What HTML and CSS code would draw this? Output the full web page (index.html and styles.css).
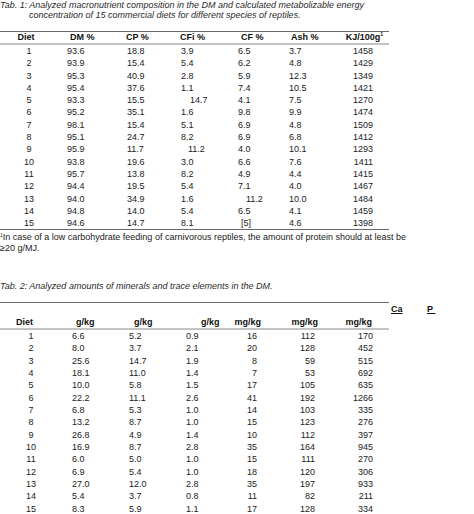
FILE: index.html
```html
<!DOCTYPE html>
<html>
<head>
<meta charset="utf-8">
<link rel="stylesheet" href="styles.css">
</head>
<body>
<div class="cap cap1">
  <div class="l1">Tab. 1: Analyzed macronutrient composition in the DM and calculated metabolizable energy</div>
  <div class="l2">concentration of 15 commercial diets for different species of reptiles.</div>
</div>
<div class="t1">
  <div class="row head"><span>Diet</span><span>DM %</span><span>CP %</span><span>CFi %</span><span>CF %</span><span>Ash %</span><span>KJ/100g<sup>1</sup></span></div>
  <div class="body">
    <div class="row"><span>1</span><span>93.6</span><span>18.8</span><span>3.9</span><span>6.5</span><span>3.7</span><span>1458</span></div>
    <div class="row"><span>2</span><span>93.9</span><span>15.4</span><span>5.4</span><span>6.2</span><span>4.8</span><span>1429</span></div>
    <div class="row"><span>3</span><span>95.3</span><span>40.9</span><span>2.8</span><span>5.9</span><span>12.3</span><span>1349</span></div>
    <div class="row"><span>4</span><span>95.4</span><span>37.6</span><span>1.1</span><span>7.4</span><span>10.5</span><span>1421</span></div>
    <div class="row"><span>5</span><span>93.3</span><span>15.5</span><span class="in9">14.7</span><span>4.1</span><span>7.5</span><span>1270</span></div>
    <div class="row"><span>6</span><span>95.2</span><span>35.1</span><span>1.6</span><span>9.8</span><span>9.9</span><span>1474</span></div>
    <div class="row"><span>7</span><span>98.1</span><span>15.4</span><span>5.1</span><span>6.9</span><span>4.8</span><span>1509</span></div>
    <div class="row"><span>8</span><span>95.1</span><span>24.7</span><span>8.2</span><span>6.9</span><span>6.8</span><span>1412</span></div>
    <div class="row"><span>9</span><span>95.9</span><span>11.7</span><span class="in7">11.2</span><span>4.0</span><span>10.1</span><span>1293</span></div>
    <div class="row"><span>10</span><span>93.8</span><span>19.6</span><span>3.0</span><span>6.6</span><span>7.6</span><span>1411</span></div>
    <div class="row"><span>11</span><span>95.7</span><span>13.8</span><span>8.2</span><span>4.9</span><span>4.4</span><span>1415</span></div>
    <div class="row"><span>12</span><span>94.4</span><span>19.5</span><span>5.4</span><span>7.1</span><span>4.0</span><span>1467</span></div>
    <div class="row"><span>13</span><span>94.0</span><span>34.9</span><span>1.6</span><span class="in8">11.2</span><span>10.0</span><span>1484</span></div>
    <div class="row"><span>14</span><span>94.8</span><span>14.0</span><span>5.4</span><span>6.5</span><span>4.1</span><span>1459</span></div>
    <div class="row"><span>15</span><span>94.6</span><span>14.7</span><span>8.1</span><span class="in3">[5]</span><span>4.6</span><span>1398</span></div>
  </div>
</div>
<div class="note">
  <div class="n1"><sup>1</sup>In case of a low carbohydrate feeding of carnivorous reptiles, the amount of protein should at least be</div>
  <div class="n2">≥20 g/MJ.</div>
</div>
<div class="cap cap2">Tab. 2: Analyzed amounts of minerals and trace elements in the DM.</div>
<div class="wrap2">
  <div class="t2">
    <div class="row head"><span>Diet</span><span>g/kg</span><span>g/kg</span><span>g/kg</span><span>mg/kg</span><span>mg/kg</span><span>mg/kg</span></div>
    <div class="body">
      <div class="row"><span>1</span><span>6.6</span><span>5.2</span><span>0.9</span><span>16</span><span>112</span><span>170</span></div>
      <div class="row"><span>2</span><span>8.0</span><span>3.7</span><span>2.1</span><span>20</span><span>128</span><span>452</span></div>
      <div class="row"><span>3</span><span>25.6</span><span>14.7</span><span>1.9</span><span>8</span><span>59</span><span>515</span></div>
      <div class="row"><span>4</span><span>18.1</span><span>11.0</span><span>1.4</span><span>7</span><span>53</span><span>692</span></div>
      <div class="row"><span>5</span><span>10.0</span><span>5.8</span><span>1.5</span><span>17</span><span>105</span><span>635</span></div>
      <div class="row"><span>6</span><span>22.2</span><span>11.1</span><span>2.6</span><span>41</span><span>192</span><span>1266</span></div>
      <div class="row"><span>7</span><span>6.8</span><span>5.3</span><span>1.0</span><span>14</span><span>103</span><span>335</span></div>
      <div class="row"><span>8</span><span>13.2</span><span>8.7</span><span>1.0</span><span>15</span><span>123</span><span>276</span></div>
      <div class="row"><span>9</span><span>26.8</span><span>4.9</span><span>1.4</span><span>10</span><span>112</span><span>397</span></div>
      <div class="row"><span>10</span><span>16.9</span><span>8.7</span><span>2.8</span><span>35</span><span>164</span><span>945</span></div>
      <div class="row"><span>11</span><span>6.0</span><span>5.0</span><span>1.0</span><span>15</span><span>111</span><span>270</span></div>
      <div class="row"><span>12</span><span>6.9</span><span>5.4</span><span>1.0</span><span>18</span><span>120</span><span>306</span></div>
      <div class="row"><span>13</span><span>27.0</span><span>12.0</span><span>2.8</span><span>35</span><span>197</span><span>933</span></div>
      <div class="row"><span>14</span><span>5.4</span><span>3.7</span><span>0.8</span><span>11</span><span>82</span><span>211</span></div>
      <div class="row"><span>15</span><span>8.3</span><span>5.9</span><span>1.1</span><span>17</span><span>128</span><span>334</span></div>
    </div>
  </div>
  <div class="side"><span class="ca">Ca</span><span class="p">P&nbsp;</span></div>
</div>
</body>
</html>
```

FILE: styles.css
```css
html, body {
  margin: 0;
  padding: 0;
  background: #ffffff;
}
body {
  width: 474px;
  height: 514px;
  overflow: hidden;
  font-family: "Liberation Sans", Arial, sans-serif;
  font-size: 9px;
  color: #222222;
}
.cap {
  font-style: italic;
  line-height: 11px;
  color: #2a2a2a;
}
.cap1 {
  line-height: 10px;
  margin-bottom: 11px;
}
.cap1 .l1 {
  white-space: nowrap;
}
.cap1 .l2 {
  padding-left: 29px;
  white-space: nowrap;
}
.row {
  display: grid;
  white-space: nowrap;
}
.head {
  font-weight: bold;
  color: #111111;
}
.head sup {
  font-size: 5px;
  vertical-align: 4px;
  line-height: 0;
}

/* Table 1 */
.t1 {
  width: 389px;
  border-top: 1px solid #6a6a6a;
}
.t1 .row {
  grid-template-columns: 58px 64px 54px 57px 51px 55px 50px;
}
.t1 .head {
  height: 11px;
  line-height: 11px;
  border-bottom: 2px solid #c4c4c4;
}
.t1 .body {
  border-bottom: 1px solid #6a6a6a;
}
.t1 .body .row {
  height: 12.3px;
  line-height: 12.3px;
}
.t1 .row > :nth-child(1) { text-align: center; }
.t1 .row > :nth-child(2) { padding-left: 9px; }
.t1 .row > :nth-child(3) { padding-left: 5px; }
.t1 .row > :nth-child(4) { padding-left: 5px; }
.t1 .row > :nth-child(5) { padding-left: 5px; }
.t1 .row > :nth-child(6) { padding-left: 5px; }
.t1 .row > :nth-child(7) { text-align: right; padding-right: 16px; }
.t1 .head > :nth-child(1) { padding-right: 6px; }
.t1 .head > :nth-child(2) { padding-left: 12px; }
.t1 .head > :nth-child(3) { padding-left: 4px; }
.t1 .head > :nth-child(4) { padding-left: 4px; }
.t1 .head > :nth-child(5) { padding-left: 8px; }
.t1 .head > :nth-child(6) { padding-left: 7px; }
.t1 .head > :nth-child(7) { padding-right: 6px; }
.t1 .row > .in9 { padding-left: 14px; }
.t1 .row > .in7 { padding-left: 12px; }
.t1 .row > .in8 { padding-left: 13px; }
.t1 .row > .in3 { padding-left: 8px; }

/* Footnote */
.note {
  padding-top: 2px;
  line-height: 11px;
  white-space: nowrap;
}
.note sup {
  font-size: 5px;
  vertical-align: 3px;
  line-height: 0;
}

/* Table 2 */
.cap2 {
  margin-top: 27px;
  margin-bottom: 9.5px;
  white-space: nowrap;
}
.wrap2 {
  display: flex;
  align-items: flex-start;
}
.t2 {
  width: 389px;
  flex: none;
  border-top: 1px solid #6a6a6a;
}
.t2 .row {
  grid-template-columns: 62px 60px 58px 52px 38px 60px 59px;
}
.t2 .head {
  padding-top: 13px;
  height: 12px;
  line-height: 12px;
  border-bottom: 2px solid #c4c4c4;
}
.t2 .body .row {
  height: 12.35px;
  line-height: 12.35px;
}
.t2 .row > :nth-child(1) { text-align: center; }
.t2 .row > :nth-child(2) { padding-left: 10px; }
.t2 .row > :nth-child(3) { padding-left: 7px; }
.t2 .row > :nth-child(4) { padding-left: 6px; }
.t2 .row > :nth-child(5) { text-align: right; padding-right: 13px; }
.t2 .row > :nth-child(6) { text-align: right; padding-right: 15px; }
.t2 .row > :nth-child(7) { text-align: right; padding-right: 16px; }
.t2 .head > :nth-child(1) { padding-right: 13px; }
.t2 .head > :nth-child(2) { padding-left: 14px; }
.t2 .head > :nth-child(3) { padding-left: 12px; }
.t2 .head > :nth-child(4) { padding-left: 21px; }
.t2 .head > :nth-child(5) { padding-right: 9px; }
.t2 .head > :nth-child(6) { padding-right: 12px; }
.t2 .head > :nth-child(7) { padding-right: 17px; }
.side {
  display: flex;
  padding-top: 2.5px;
  padding-left: 2px;
  line-height: 11px;
  font-weight: bold;
  color: #111111;
}
.side span {
  text-decoration: underline;
  white-space: pre;
}
.side .ca {
  width: 36px;
}
```
